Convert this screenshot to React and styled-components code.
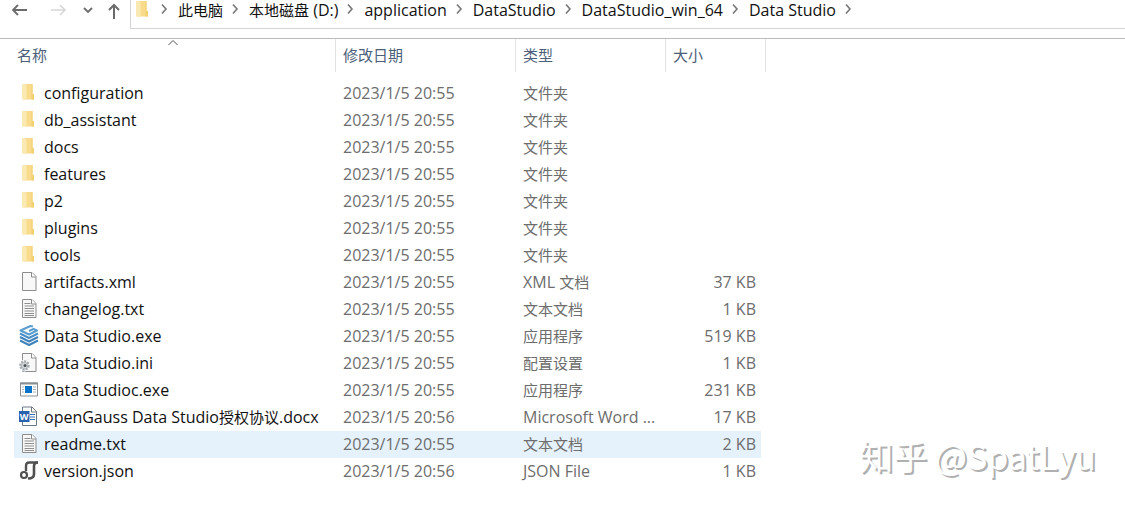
import React from "react";
import styled, { createGlobalStyle } from "styled-components";

const GlobalStyle = createGlobalStyle`
  * { box-sizing: border-box; }
  body {
    margin: 0;
    background: #fff;
    color: #111;
    font-family: "Open Sans", "Noto Sans CJK SC", sans-serif;
    font-size: 16px;
  }
`;

const Window = styled.div`
  position: relative;
  min-height: 100vh;
  overflow: hidden;
`;

const Toolbar = styled.header`
  display: flex;
  align-items: flex-start;
  padding-bottom: 9px;
  border-bottom: 1px solid #bcbcbc;
`;

const NavButtons = styled.div`
  display: flex;
  align-items: center;
  height: 20px;
  padding-left: 10px;
  gap: 18px;
  width: 130px;
  flex: none;
`;

const IconButton = styled.button`
  display: flex;
  flex: none;
  padding: 0;
  border: 0;
  background: none;
  color: ${(p) => p.$color || "#6b6b6b"};
  margin-left: ${(p) => (p.$tight ? "-4px" : "0")};
`;

const AddressBar = styled.nav`
  display: flex;
  flex: 1;
  align-items: flex-start;
  height: 29px;
  padding-left: 5px;
  border: solid #d4d4d4;
  border-width: 0 0 1px 1px;
`;

const PathIcon = styled.svg`
  width: 16px;
  height: 23px;
  flex: none;
`;

const Crumbs = styled.ol`
  display: flex;
  align-items: center;
  height: 20px;
  margin: 0;
  padding: 0;
  list-style: none;
`;

const Crumb = styled.li`
  display: flex;
  align-items: center;
  line-height: 20px;
  white-space: nowrap;
`;

const CrumbLink = styled.a`
  color: #111;
  text-decoration: none;
`;

const Separator = styled.svg`
  width: 26px;
  height: 20px;
  flex: none;
`;

const Cjk = styled.span`
  font-size: 15px;
`;

const FileTable = styled.table`
  table-layout: fixed;
  width: 752px;
  margin-left: 14px;
  border-collapse: separate;
  border-spacing: 0;
`;

const Column = styled.col`
  width: ${(p) => p.$width}px;
`;

const HeadCell = styled.th`
  position: relative;
  height: 33px;
  padding: 0;
  border-right: 1px solid #e3e3e3;
  font-weight: 400;
  text-align: left;
  vertical-align: top;
`;

const SortButton = styled.button`
  display: block;
  width: 100%;
  padding: 0 0 0 ${(p) => (p.$first ? "3px" : "7px")};
  border: 0;
  background: none;
  color: #4c6079;
  font: inherit;
  line-height: 32px;
  text-align: left;
`;

const SortMark = styled.svg`
  position: absolute;
  top: 0;
  left: 50%;
  width: 12px;
  height: 7px;
  margin-left: -8px;
`;

const Body = styled.tbody`
  &::before {
    content: "";
    display: block;
    height: 8px;
  }
`;

const Row = styled.tr`
  background: ${(p) => (p.$selected ? "#e5f2fc" : "none")};
`;

const Cell = styled.td`
  height: 27px;
  padding: 0 7px;
  color: #6d6d6d;
  line-height: 27px;
  white-space: nowrap;
  overflow: hidden;
  text-overflow: ellipsis;
`;

const SizeCell = styled(Cell)`
  padding-right: 5px;
  border-right: 5px solid #fff;
  text-align: right;
`;

const NameCell = styled(Cell)`
  padding: 0 0 0 5px;
  color: #111;
`;

const FileName = styled.div`
  display: flex;
  align-items: center;
  gap: 5px;
  height: 27px;
`;

const FileIcon = styled.svg`
  width: 20px;
  height: 23px;
  flex: none;
`;

const Watermark = styled.div`
  position: absolute;
  right: 29px;
  bottom: 28px;
  color: #fff;
  font-family: "Noto Sans CJK SC", sans-serif;
  font-size: 34px;
  line-height: 48px;
  text-shadow: 2px 2px 0 #b0b0b0;
`;

function Label({ children }) {
  return children
    .split(/([\u4e00-\u9fff]+)/)
    .filter(Boolean)
    .map((run, i) =>
      /[\u4e00-\u9fff]/.test(run) ? <Cjk key={i}>{run}</Cjk> : <span key={i}>{run}</span>
    );
}

const Page = ({ children }) => (
  <>
    <path d="M3.5 1.5h9.5l4 4v14h-13.5z" fill="#f8f8f8" stroke="#8d8d8d" />
    <path d="M12.5 1.5v4.500h4.500" fill="#fff" stroke="#8d8d8d" />
    {children}
  </>
);

const icons = {
  folder: (
    <>
      <path d="M3 2h10.500v10h1.500v5.500H4l-1-1z" fill="#f8dc8c" />
      <path d="M3 2h3.500l1 1.500v14H4l-1-1z" fill="#fbe9b4" />
      <path d="M12.500 2h1v10h1.500v5.500h-2.500z" fill="#f2cf70" />
    </>
  ),
  file: <Page />,
  text: (
    <Page>
      <path d="M5.500 5.500h6M5.500 8h9.500M5.500 10.500h9.500M5.500 13h9.500M5.500 15.500h9.500M5.500 17.500h9.500" stroke="#8f8f8f" />
    </Page>
  ),
  studio: (
    <g fill="none" stroke="#3f83ba" strokeWidth="2" strokeLinejoin="round">
      <path d="M14 1.500L11.500 1 1.500 5.500 10 9.500l8-4-3.500-1.500L10 6" stroke="#5b9fd0" />
      <path d="M1 8.500l9 4.500 9-4.500" stroke="#4a90c6" />
      <path d="M1 12l9 4.500 9-4.500" />
      <path d="M1 15.500l9 4.500 9-4.500" />
    </g>
  ),
  ini: (
    <>
      <Page />
      <circle cx="5.500" cy="13.500" r="6" fill="#fff" />
      <circle cx="5.500" cy="13.500" r="4" fill="#d3d7d9" stroke="#a6acb0" strokeWidth="2.600" strokeDasharray="2 1" />
      <circle cx="6" cy="13.500" r="1.500" fill="#4b5358" />
    </>
  ),
  console: (
    <>
      <path d="M1.500 4h17v13h-17z" fill="#fff" stroke="#8a8f93" />
      <path d="M1 3.500h18v2H1z" fill="#8a8f93" />
      <path d="M6 7h7v7H6z" fill="#0874c9" />
      <path d="M3 8h2M3 10.500h2M3 13h2M14 8h3M14 10.500h3M14 13h3" stroke="#a7b3bb" />
    </>
  ),
  word: (
    <>
      <path d="M3.500 1h9.500l4.500 4.500v14h-14z" fill="#fff" stroke="#6c7884" />
      <path d="M12.500 1v5h5" fill="none" stroke="#6c7884" />
      <path d="M11 8.500h5M11 11h5M11 13.500h5" stroke="#376cad" />
      <path d="M0 5h10.500v11H0z" fill="#2b62ad" />
      <text x="5" y="14" textAnchor="middle" fontSize="9" fontWeight="700" fill="#fff">W</text>
    </>
  ),
  json: (
    <g fill="none" stroke="#505050">
      <path d="M7 11V6q0-3.500 3-3.500h9" strokeWidth="2.400" />
      <path d="M19 2.500q-4 0-4 3.500v8q0 4.500-6 4.500" strokeWidth="2.600" />
      <circle cx="5" cy="15" r="3" strokeWidth="2.200" />
    </g>
  ),
};

const crumbs = ["此电脑", "本地磁盘 (D:)", "application", "DataStudio", "DataStudio_win_64", "Data Studio"];

const columns = [
  { title: "名称", width: 322 },
  { title: "修改日期", width: 180 },
  { title: "类型", width: 150 },
  { title: "大小", width: 100 },
];

const files = [
  ["folder", "configuration", "2023/1/5 20:55", "文件夹", ""],
  ["folder", "db_assistant", "2023/1/5 20:55", "文件夹", ""],
  ["folder", "docs", "2023/1/5 20:55", "文件夹", ""],
  ["folder", "features", "2023/1/5 20:55", "文件夹", ""],
  ["folder", "p2", "2023/1/5 20:55", "文件夹", ""],
  ["folder", "plugins", "2023/1/5 20:55", "文件夹", ""],
  ["folder", "tools", "2023/1/5 20:55", "文件夹", ""],
  ["file", "artifacts.xml", "2023/1/5 20:55", "XML 文档", "37 KB"],
  ["text", "changelog.txt", "2023/1/5 20:55", "文本文档", "1 KB"],
  ["studio", "Data Studio.exe", "2023/1/5 20:55", "应用程序", "519 KB"],
  ["ini", "Data Studio.ini", "2023/1/5 20:55", "配置设置", "1 KB"],
  ["console", "Data Studioc.exe", "2023/1/5 20:55", "应用程序", "231 KB"],
  ["word", "openGauss Data Studio授权协议.docx", "2023/1/5 20:56", "Microsoft Word ...", "17 KB"],
  ["text", "readme.txt", "2023/1/5 20:55", "文本文档", "2 KB"],
  ["json", "version.json", "2023/1/5 20:56", "JSON File", "1 KB"],
];

const selectedName = "readme.txt";

const Chevron = () => (
  <Separator viewBox="0 0 26 20" aria-hidden="true">
    <path d="M10 4.500l4 4.500-4 4.500" fill="none" stroke="#777" strokeWidth="1.600" />
  </Separator>
);

export default function App() {
  return (
    <Window>
      <GlobalStyle />
      <Toolbar>
        <NavButtons>
          <IconButton aria-label="Back">
            <svg width="20" height="20" viewBox="0 0 20 20" fill="none" stroke="currentColor" strokeWidth="1.800">
              <path d="M17 10H3M8 5l-5 5 5 5" />
            </svg>
          </IconButton>
          <IconButton aria-label="Forward" $color="#d6d6d6">
            <svg width="20" height="20" viewBox="0 0 20 20" fill="none" stroke="currentColor" strokeWidth="1.500">
              <path d="M3 10h14M12 5l5 5-5 5" />
            </svg>
          </IconButton>
          <IconButton aria-label="Recent locations" $tight>
            <svg width="12" height="20" viewBox="0 0 12 20" fill="none" stroke="currentColor" strokeWidth="1.800">
              <path d="M2 8l4 4 4-4" />
            </svg>
          </IconButton>
          <IconButton aria-label="Up" $tight>
            <svg width="14" height="20" viewBox="0 0 14 20" fill="none" stroke="currentColor" strokeWidth="2">
              <path d="M6 19V5M1 10l5-5 5 5" />
            </svg>
          </IconButton>
        </NavButtons>
        <AddressBar aria-label="Path">
          <PathIcon viewBox="3 1 16 23" aria-hidden="true">{icons.folder}</PathIcon>
          <Crumbs>
            <Crumb><Chevron /></Crumb>
            {crumbs.map((name) => (
              <Crumb key={name}>
                <CrumbLink href="#"><Label>{name}</Label></CrumbLink>
                <Chevron />
              </Crumb>
            ))}
          </Crumbs>
        </AddressBar>
      </Toolbar>
      <FileTable>
        <colgroup>
          {columns.map((c) => <Column key={c.title} $width={c.width} />)}
        </colgroup>
        <thead>
          <tr>
            {columns.map((c, i) => (
              <HeadCell key={c.title} scope="col" aria-sort={i === 0 ? "ascending" : undefined}>
                <SortButton $first={i === 0}><Label>{c.title}</Label></SortButton>
                {i === 0 && (
                  <SortMark viewBox="0 0 12 7" aria-hidden="true">
                    <path d="M1.500 6L6 1.500 10.500 6" fill="none" stroke="#555" />
                  </SortMark>
                )}
              </HeadCell>
            ))}
          </tr>
        </thead>
        <Body>
          {files.map(([icon, name, date, type, size]) => (
            <Row key={name} $selected={name === selectedName}>
              <NameCell>
                <FileName>
                  <FileIcon viewBox="0 0 20 23" aria-hidden="true">{icons[icon]}</FileIcon>
                  <span><Label>{name}</Label></span>
                </FileName>
              </NameCell>
              <Cell>{date}</Cell>
              <Cell><Label>{type}</Label></Cell>
              <SizeCell>{size}</SizeCell>
            </Row>
          ))}
        </Body>
      </FileTable>
      <Watermark>知乎 @SpatLyu</Watermark>
    </Window>
  );
}
